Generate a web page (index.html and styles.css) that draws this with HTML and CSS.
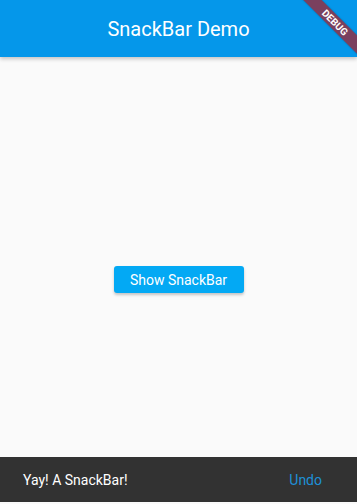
FILE: index.html
```html
<!DOCTYPE html>
<html>
<head>
<meta charset="utf-8">
<link rel="stylesheet" href="styles.css">
</head>
<body>
<div class="app">
  <header class="appbar">
    <h1 class="title">SnackBar Demo</h1>
  </header>
  <main class="content">
    <button class="raised">Show SnackBar</button>
  </main>
</div>
<div class="snackbar">
  <span class="snack-text">Yay! A SnackBar!</span>
  <span class="snack-action">Undo</span>
</div>
<div class="debug-banner">DEBUG</div>
</body>
</html>
```
FILE: styles.css
```css
html, body {
  margin: 0;
  padding: 0;
  width: 357px;
  height: 504px;
  overflow: hidden;
  background: #fafafa;
  font-family: Roboto, "Noto Sans", sans-serif;
}
body {
  position: relative;
}
.app {
  display: flex;
  flex-direction: column;
  height: 504px;
}
.appbar {
  height: 57px;
  flex: 0 0 57px;
  background: #0597ea;
  display: flex;
  align-items: center;
  justify-content: center;
  box-shadow: 0 2px 4px rgba(0,0,0,0.22);
  position: relative;
  z-index: 1;
}
.title {
  margin: 0;
  color: #fff;
  font-size: 20px;
  font-weight: 400;
  letter-spacing: 0;
}
.content {
  flex: 1;
  display: flex;
  align-items: center;
  justify-content: center;
  padding-bottom: 2px;
}
.raised {
  width: 130px;
  height: 27px;
  border: none;
  border-radius: 3px;
  background: #03a9f4;
  color: #fff;
  font-family: Roboto, "Noto Sans", sans-serif;
  font-size: 14px;
  font-weight: 400;
  padding: 0;
  box-shadow: 0 2px 3px rgba(0,0,0,0.22);
}
.snackbar {
  position: absolute;
  left: 0;
  right: 0;
  bottom: 2px;
  height: 45px;
  background: #323232;
  display: flex;
  align-items: center;
  justify-content: space-between;
  padding: 0 35px 0 23px;
  color: #fff;
  font-size: 14px;
  z-index: 2;
}
.snack-action {
  color: #1e90d6;
}
.debug-banner {
  position: absolute;
  z-index: 10;
  left: 293px;
  top: 16px;
  width: 84px;
  height: 13px;
  line-height: 13px;
  background: rgba(168, 30, 40, 0.72);
  color: #fff;
  font-family: Roboto, "Noto Sans", sans-serif;
  font-size: 10px;
  font-weight: 700;
  text-align: center;
  transform: rotate(45deg);
  box-shadow: 0 0 2px rgba(0,0,0,0.25);
}
```
